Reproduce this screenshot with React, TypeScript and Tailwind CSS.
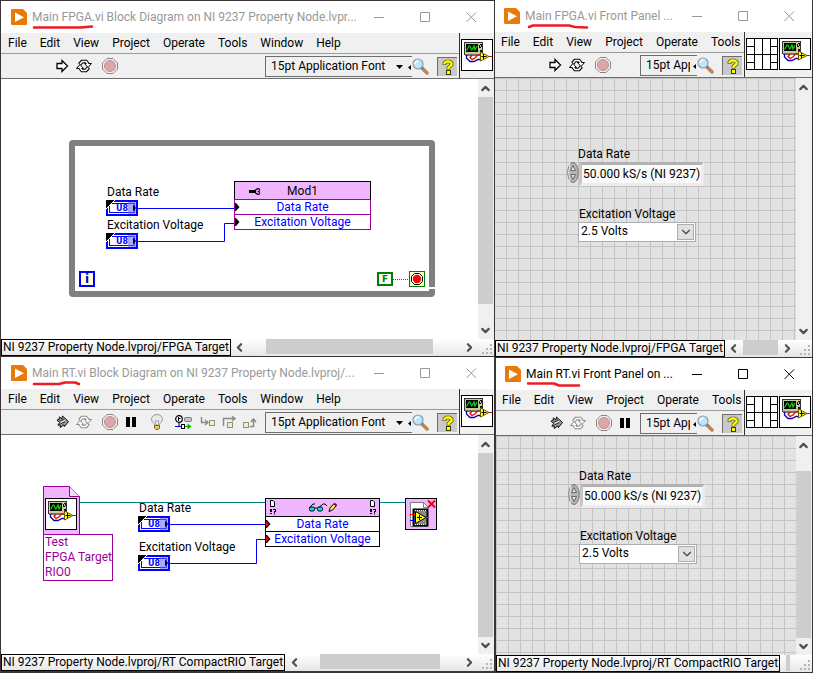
import React, { useId } from "react";
import { ChevronDown, ChevronLeft, ChevronRight, ChevronUp } from "lucide-react";

const menus = ["File", "Edit", "View", "Project", "Operate", "Tools", "Window", "Help"];

/* ---------- Icons ---------- */

function LogoIcon() {
    return (
        <svg width="16" height="16" viewBox="0 0 16 16" className="shrink-0" aria-hidden="true">
            <path d="M0 1 Q0 0 1 0 H12 L16 4 V15 Q16 16 15 16 H1 Q0 16 0 15 Z" fill="#e9790b" />
            <path d="M4 3.5 L13 8.2 L4 13 Z" fill="#fff" />
        </svg>
    );
}

function ViIcon() {
    return (
        <svg width="32" height="32" viewBox="0 0 32 32" className="block shrink-0" aria-hidden="true">
            <rect x="0.5" y="0.5" width="31" height="31" fill="#fff" stroke="#000" />
            <rect x="3.5" y="3.5" width="18" height="12" fill="#c9c9a3" stroke="#333" />
            <rect x="4" y="15" width="17" height="2" fill="#77775c" />
            <rect x="5" y="5" width="12" height="8" fill="#000" />
            <path d="M5.500 11.500 L8 7 L9 7 L10.500 11 L11 11 L13 7 L14 11 L16 7" fill="none" stroke="#14d214" strokeWidth="1.200" />
            <path d="M19 5h2v1h-2zM18 6h1v2h-1zM20 6h1v2h-1zM18 8h2v1h-2zM19 11h2v2h-2z" fill="#111" />
            <path d="M5.5 16 V19 L9 22.5 H13 L17 20.5 H19" fill="none" stroke="#0000b4" strokeWidth="1.300" />
            <path d="M11 16 L9 18.500 L11 20.5 L14 19 L16 16.500 L19 15.5" fill="none" stroke="#f00000" strokeWidth="1.300" />
            <path d="M27 17.5 H31" stroke="#f00000" />
            <path d="M19.5 13 L28 17.5 L19.5 22 Z" fill="#ffff1e" stroke="#6b5a00" />
            <path d="M20.5 17.5h5M22.500 15v5" stroke="#000" />
        </svg>
    );
}

function ConnectorIcon() {
    return (
        <svg width="32" height="32" viewBox="0 0 32 32" className="block shrink-0" aria-hidden="true">
            <rect x="0.5" y="0.5" width="31" height="31" fill="#fff" stroke="#000" />
            <path d="M8.5 0V32M16.5 0V32M24.5 0V32M0 16.5H32M0 8.5H8M0 24.5H8M24 8.5H32M24 24.5H32" stroke="#000" />
        </svg>
    );
}

function RunIcon({ deployed }: { deployed?: boolean }) {
    if (deployed) {
        return (
            <svg width="13" height="14" viewBox="0 0 14 14" aria-hidden="true">
                <path d="M1 5L3.500 4V1.500L6.500 3.500L7 0.500L13.500 6.500L9 12L8.500 10L4.500 13V10L2 10.500L4 7.500Z" fill="#9a9a9a" stroke="#000" />
                <path d="M4 6L9 4M5 9L10 6.500" stroke="#222" />
                <path d="M5 7.500L10 5" stroke="#fff" />
            </svg>
        );
    }
    return (
        <svg width="13" height="14" viewBox="0 0 13 14" aria-hidden="true">
            <path d="M1 4.5H6V1.5L11.5 7L6 12.5V9.5H1Z" fill="#fff" stroke="#000" strokeWidth="1.3" />
        </svg>
    );
}

function RunContinuousIcon({ dim }: { dim?: boolean }) {
    const color = dim ? "#8c8c8c" : "#000";
    return (
        <svg width="16" height="14" viewBox="0 0 16 14" fill="none" aria-hidden="true">
            <path d="M3.500 5.500L6 2.500H10L12 5" stroke={color} strokeWidth="3.600" />
            <path d="M12.500 8.500L10 11.500H6L4 9" stroke={color} strokeWidth="3.600" />
            <path d="M8.500 4.500H15.500L12 8.500Z" fill="#fff" stroke={color} />
            <path d="M0.500 9.500H7.500L4 5.500Z" fill="#fff" stroke={color} />
            <path d="M4 5L6.200 2.500H10L12 5" stroke="#fff" strokeWidth="1.600" />
            <path d="M12 9L9.800 11.500H6L4 9" stroke="#fff" strokeWidth="1.600" />
        </svg>
    );
}

function AbortIcon() {
    return (
        <svg width="16" height="16" viewBox="0 0 16 16" aria-hidden="true">
            <path d="M5 0.5H11L15.5 5V11L11 15.5H5L0.5 11V5Z" fill="#f6f0f0" stroke="#858585" />
            <circle cx="8" cy="8" r="5.500" fill="#dba6a8" stroke="#c29091" />
        </svg>
    );
}

function PauseIcon() {
    return (
        <svg width="10" height="12" viewBox="0 0 10 12" aria-hidden="true">
            <path d="M0 1H4V11H0ZM6 1H10V11H6Z" fill="#000" />
        </svg>
    );
}

function BulbIcon() {
    return (
        <svg width="12" height="16" viewBox="0 0 12 16" aria-hidden="true">
            <path d="M6 0.500C2.500 0.500 0.500 3 0.500 5.500C0.500 8 3.500 9 3.500 11H8.500C8.500 9 11.500 8 11.500 5.500C11.500 3 9.500 0.500 6 0.500Z" fill="#e9e9e9" stroke="#969696" />
            <path d="M4.500 10V6L6 7.500L7.500 6V10" fill="none" stroke="#aaa" />
            <path d="M3.500 11.500H8.500V14L7 15.500H5L3.500 14Z" fill="#e0cf50" stroke="#6b6430" />
        </svg>
    );
}

function RetainIcon() {
    return (
        <svg width="17" height="15" viewBox="0 0 17 15" aria-hidden="true">
            <circle cx="4" cy="4" r="3.300" fill="#fff" stroke="#000" strokeWidth="1.200" />
            <path d="M3.500 2V6M3.500 3.500H5.500M4 8V11" stroke="#000" />
            <rect x="9.500" y="2.500" width="7" height="4" rx="1" fill="#c4c4c4" stroke="#777" />
            <path d="M0 11.500H6" stroke="#0000d8" />
            <rect x="6.500" y="9.500" width="3" height="4" fill="#fff" stroke="#000" />
            <path d="M10 11.500H14" stroke="#009600" />
            <path d="M12.500 8.500L16.500 11.500L12.500 14.500Z" fill="#00b400" />
        </svg>
    );
}

function StepIcon({ kind }: { kind: "into" | "over" | "out" }) {
    const paths = {
        into: "M1.5 1V6.500H7M5 4L8 6.500L5 9",
        over: "M1.5 10V2.500H12M10 0.500L13 2.500L10 5",
        out: "M8 10.500H11.500V4M9 6L11.500 3L14 6",
    };
    const box = { into: 9, over: 5, out: 1 };
    return (
        <svg width="16" height="13" viewBox="0 0 16 13" aria-hidden="true">
            <rect x={box[kind] + 0.5} y={kind === "into" ? 4.5 : 6.5} width="5" height="5" fill="#f2f2bf" stroke="#8f8f8f" />
            <path d={paths[kind]} fill="none" stroke="#8a8a8a" strokeWidth="1.500" />
        </svg>
    );
}

function SearchIcon() {
    return (
        <svg width="17" height="17" viewBox="0 0 17 17" aria-hidden="true">
            <path d="M10 10L15 15" stroke="#b8855c" strokeWidth="3.500" strokeLinecap="round" />
            <path d="M9.500 9L11 10.500" stroke="#777" strokeWidth="2" />
            <circle cx="6" cy="6" r="5" fill="#bfe5fb" stroke="#8b9cb0" strokeWidth="1.200" />
            <path d="M3 6Q3.500 3 6.500 3" fill="none" stroke="#fff" strokeWidth="1.500" />
        </svg>
    );
}

function HelpIcon() {
    return (
        <svg width="12" height="16" viewBox="0 0 12 16" aria-hidden="true">
            <path d="M2.500 6V4L4.500 2.500H7.500L9.500 4V6L6.500 8.500V10.500" fill="none" stroke="#3a3a00" strokeWidth="3.600" />
            <rect x="4" y="11" width="5" height="5" fill="#3a3a00" />
            <path d="M2.500 5.500V4L4.500 2.500H7.500L9.500 4V6L6.500 8.500V10" fill="none" stroke="#ffff00" strokeWidth="2.400" />
            <rect x="5" y="12" width="3" height="3" fill="#ffff00" />
        </svg>
    );
}

/* ---------- Window chrome ---------- */

interface VIWindowProps {
    title: string;
    active?: boolean;
    underline: string;
    running?: boolean;
    panel?: boolean;
    target: string;
    thumbX?: string;
    thumbY?: string;
    className: string;
    canvasClassName: string;
    children: React.ReactNode;
}

function TitleBar({ title, active, underline, panel }: { title: string; active?: boolean; underline: string; panel?: boolean }) {
    const tone = active ? "text-black" : "text-[#999999]";
    const button = "flex w-[46px] h-8 items-center justify-center";
    return (
        <header className={`relative flex h-8 items-center bg-white ${panel ? "pl-[9px]" : "pl-[10px]"} ${tone}`}>
            <LogoIcon />
            <h2 className="ml-[5px] min-w-0 flex-1 overflow-hidden whitespace-nowrap">{title}</h2>
            <svg width="80" height="8" viewBox="0 0 80 8" className="absolute left-[30px] top-[22px]" aria-hidden="true">
                <path d={underline} fill="none" stroke="#ed1c24" strokeWidth="2.500" strokeLinecap="round" strokeLinejoin="round" />
            </svg>
            <div className="flex shrink-0">
                <button aria-label="Minimize" className={button}>
                    <svg width="11" height="11" stroke="currentColor" fill="none"><path d="M0 5.500H10" /></svg>
                </button>
                <button aria-label="Maximize" className={button}>
                    <svg width="11" height="11" stroke="currentColor" fill="none"><path d="M0.500 0.500H9.500V9.500H0.500Z" /></svg>
                </button>
                <button aria-label="Close" className={button}>
                    <svg width="11" height="11" stroke="currentColor" fill="none"><path d="M0.500 0.500L10 10M10 0.500L0.500 10" /></svg>
                </button>
            </div>
        </header>
    );
}

function Toolbar({ running, panel }: { running?: boolean; panel?: boolean }) {
    return (
        <div className={`flex h-6 items-center overflow-hidden ${panel ? "pl-[54px]" : "pl-[55px]"}`}>
            <button aria-label="Run" className="shrink-0"><RunIcon deployed={running} /></button>
            <button aria-label="Run Continuously" className="ml-[7px] shrink-0"><RunContinuousIcon dim={running} /></button>
            <button aria-label="Abort" className="ml-[10px] shrink-0"><AbortIcon /></button>
            {running && <button aria-label="Pause" className="ml-2 shrink-0"><PauseIcon /></button>}
            {running && !panel && (
                <>
                    <button aria-label="Highlight Execution" className="ml-[15px] shrink-0"><BulbIcon /></button>
                    <button aria-label="Retain Wire Values" className="ml-3 shrink-0"><RetainIcon /></button>
                    <button aria-label="Step Into" className="ml-2 shrink-0"><StepIcon kind="into" /></button>
                    <button aria-label="Step Over" className="ml-[6px] shrink-0"><StepIcon kind="over" /></button>
                    <button aria-label="Step Out" className="ml-1 shrink-0"><StepIcon kind="out" /></button>
                </>
            )}
            <div className="ml-auto flex shrink-0 items-center">
                <div className={`relative h-[21px] border-y border-l border-[#6e6e6e] ${panel ? "w-[57px]" : "w-[147px]"}`}>
                    <select
                        aria-label="Text Settings"
                        className={`block h-[19px] appearance-none overflow-hidden bg-transparent pl-[5px] text-black ${panel ? "w-[49px]" : "w-full"}`}
                    >
                        <option>15pt Application Font</option>
                    </select>
                    <svg width="16" height="7" className="pointer-events-none absolute right-0 top-[7px]" aria-hidden="true">
                        {!panel && <path d="M0 1H7L3.500 5Z" fill="#000" />}
                        <path d="M15 1V6L12 3.500Z" fill="#000" />
                    </svg>
                </div>
                <button aria-label="Search"><SearchIcon /></button>
                <button
                    aria-label="Show Context Help"
                    className="ml-2 mr-[2px] flex h-[19px] w-5 items-center justify-center border-l border-t border-[#6e6e6e] bg-[#c9c9c9]"
                >
                    <HelpIcon />
                </button>
            </div>
        </div>
    );
}

function VerticalScroll({ thumb }: { thumb?: string }) {
    return (
        <div className="flex w-4 shrink-0 flex-col bg-[#f0f0f0] pr-px text-[#505050]">
            <button aria-label="Scroll up" className="flex h-[18px] items-center justify-center">
                <ChevronUp size={13} strokeWidth={4} />
            </button>
            <div className="flex-1">{thumb && <div className={`w-full bg-[#cdcdcd] ${thumb}`} />}</div>
            <button aria-label="Scroll down" className="flex h-[17px] items-center justify-center">
                <ChevronDown size={13} strokeWidth={4} />
            </button>
        </div>
    );
}

function StatusBar({ target, thumb }: { target: string; thumb?: string }) {
    return (
        <footer className="flex h-[17px] bg-linear-to-b from-white to-[#e6e6e6] pr-px text-[#505050]">
            <span className="shrink-0 whitespace-nowrap border border-black px-px leading-[15px] text-black">{target}</span>
            {thumb ? (
                <>
                    <button aria-label="Scroll left" className="flex w-[18px] shrink-0 items-center justify-center">
                        <ChevronLeft size={13} strokeWidth={4} />
                    </button>
                    <div className="min-w-0 flex-1"><div className={`h-[15px] bg-[#cdcdcd] ${thumb}`} /></div>
                    <button aria-label="Scroll right" className="flex w-[18px] shrink-0 items-center justify-center">
                        <ChevronRight size={13} strokeWidth={4} />
                    </button>
                </>
            ) : (
                <div className="flex flex-1 justify-center"><div className="h-4 w-1 bg-[#cdcdcd]" /></div>
            )}
            <svg width="15" height="15" viewBox="0 0 15 15" className="shrink-0" aria-hidden="true">
                <path d="M12 5h2v2h-2zM8 9h2v2h-2zM12 9h2v2h-2zM4 13h2v2h-2zM8 13h2v2h-2zM12 13h2v2h-2z" fill="#b5b5b5" />
            </svg>
        </footer>
    );
}

function VIWindow({ title, active, underline, running, panel, target, thumbX, thumbY, className, canvasClassName, children }: VIWindowProps) {
    return (
        <section className={`flex flex-col border-[#3d3438] ${className}`}>
            <TitleBar title={title} active={active} underline={underline} panel={panel} />
            <div className="flex border-b border-[#6e6e6e] bg-[#f0f0f0]">
                <div className="min-w-0 flex-1">
                    <nav className={`flex h-[21px] items-center gap-[13px] overflow-hidden border-b border-[#9a9a9a] pb-px ${panel ? "pl-[6px]" : "pl-[7px]"}`}>
                        {(panel ? menus.slice(0, 6) : menus).map(name => (
                            <button key={name} className="shrink-0">{name}</button>
                        ))}
                    </nav>
                    <Toolbar running={running} panel={panel} />
                </div>
                <div className="flex items-start gap-px border-l border-[#333] px-px pt-[6px]">
                    {panel && <ConnectorIcon />}
                    <ViIcon />
                </div>
            </div>
            <div className="flex flex-1">
                <div className={`relative min-w-0 flex-1 overflow-hidden ${canvasClassName}`}>{children}</div>
                <VerticalScroll thumb={thumbY} />
            </div>
            <StatusBar target={target} thumb={thumbX} />
        </section>
    );
}

/* ---------- Block diagram parts ---------- */

function U8Terminal({ className }: { className: string }) {
    return (
        <svg width="32" height="16" viewBox="0 0 32 16" className={`absolute ${className}`}>
            <rect x="1" y="1" width="30" height="14" fill="#fff" stroke="#0000ff" strokeWidth="2" />
            <rect x="3.5" y="3.5" width="25" height="9" fill="none" stroke="#0000ff" />
            <rect x="22" y="2" width="8" height="12" fill="#a9a9ff" />
            <path d="M22 3.500H28.500V12.500H22" fill="none" stroke="#3c3cff" />
            <path d="M0 0H9L0 9Z" fill="#000" />
            <path d="M9 0L0 9" stroke="#fff" />
            <path d="M27 4.500L30 8L27 11.500Z" fill="#000" />
            <text x="10" y="11" fontSize="8" fontWeight="bold" fill="#0000ff" fontFamily="DejaVu Sans, sans-serif">U8</text>
        </svg>
    );
}

function NodeRow({ label, className, arrow }: { label: string; className: string; arrow?: string }) {
    return (
        <div className={`relative h-[15px] border-t text-center leading-[14px] text-[#0000ff] ${className}`}>
            <svg width="5" height="8" className="absolute left-0 top-[3px]" aria-hidden="true">
                <path d="M0 0H1L4.500 4L1 8H0Z" fill="#000" />
                {arrow && <path d="M0 1L3 4L0 7Z" fill={arrow} />}
            </svg>
            {label}
        </div>
    );
}

function RefCorner() {
    return (
        <svg width="7" height="16" viewBox="0 0 7 16" aria-hidden="true">
            <path d="M1.500 0.500H4L5.500 2V6.500H1.500Z" fill="#fff" stroke="#000" />
            <path d="M1 9h2v3h-2zM1 13h2v1h-2zM4 9h3v3h-1v1h-1v-2h1v-1h-2zM5 13.500h1v1h-1z" fill="#000" />
        </svg>
    );
}

function FpgaDiagram() {
    return (
        <>
            {/* While loop */}
            <div className="absolute left-[68px] top-[61px] h-[157px] w-[366px] rounded-[4px] border-[6px] border-[#808080]" />
            <svg width="8" height="10" className="absolute left-[427px] top-[208px]" aria-hidden="true">
                <path d="M1 0H8V2H1Z M6 9H8V10H6Z" fill="#fff" />
            </svg>
            <svg className="absolute inset-0 h-full w-full" fill="none" aria-hidden="true">
                <path d="M137 129.500H234M137 162.500H223.500V144.500H234" stroke="#0000ff" />
                <path d="M392 200.500H408" stroke="#008000" strokeDasharray="1 1" />
            </svg>
            <span className="absolute left-[106px] top-[105px]">Data Rate</span>
            <U8Terminal className="left-[105px] top-[121px]" />
            <span className="absolute left-[106px] top-[138px]">Excitation Voltage</span>
            <U8Terminal className="left-[105px] top-[154px]" />

            {/* Mod1 property node */}
            <div className="absolute left-[233px] top-[102px] w-[137px] whitespace-nowrap">
                <div className="relative h-[18px] border-x border-t border-black bg-[#efb6ff] text-center leading-[18px]">
                    <svg width="12" height="7" className="absolute left-[14px] top-[6px]" aria-hidden="true">
                        <path d="M0 2H7V5H0Z" fill="#000" />
                        <path d="M11 1.500L9 0.500L6.500 2V5L9 6.500L11 5.500M11 2.500L9.500 3.500L11 4.500" fill="none" stroke="#000" strokeWidth="1.300" />
                    </svg>
                    Mod1
                </div>
                <NodeRow label="Data Rate" className="border-x border-[#990099]" />
                <NodeRow label="Excitation Voltage" className="border-x border-b h-[16px] border-[#990099]" />
            </div>

            {/* Loop terminals */}
            <span className="absolute left-[78px] top-[192px] h-4 w-4 border-2 border-[#0000ff] bg-[#ffffcc] text-center font-['DejaVu_Sans',sans-serif] text-[12px] font-bold leading-[12px] text-[#0000c8]">i</span>
            <span className="absolute left-[376px] top-[193px] h-[14px] w-4 border-2 border-[#008000] bg-white text-center font-['DejaVu_Sans',sans-serif] text-[9px] font-bold leading-[10px] text-[#008000]">F</span>
            <svg width="16" height="16" className="absolute left-[408px] top-[192px]" aria-hidden="true">
                <rect x="0.5" y="0.5" width="15" height="15" fill="#ffffcc" stroke="#008000" />
                <path d="M5.500 2.500H10.500L13.500 5.500V10.500L10.500 13.500H5.500L2.500 10.500V5.500Z" fill="#fff" stroke="#000" />
                <circle cx="8" cy="8" r="4.200" fill="#ff0000" />
            </svg>
        </>
    );
}

function RtDiagram() {
    return (
        <>
            <svg className="absolute inset-0 h-full w-full" fill="none" aria-hidden="true">
                <path d="M79 67.500H264M379 67.500H404" stroke="#008080" />
                <path d="M169 89.500H265M169 128.500H255.500V104.500H265" stroke="#0000ff" />
            </svg>

            {/* FPGA VI reference */}
            <div className="absolute left-[42px] top-[51px] text-[#990099]">
                <div className="relative h-[48px] w-[37px] pl-[2px] pt-3">
                    <svg width="37" height="49" className="absolute left-0 top-0" aria-hidden="true">
                        <path d="M0.500 0.500H26.500L36.500 10.500V48.500H0.500Z" fill="#efb6ff" stroke="#990099" />
                        <path d="M26.500 0.500V10.500H36.500" fill="#f8dcff" stroke="#990099" />
                    </svg>
                    <div className="relative"><ViIcon /></div>
                </div>
                <div className="w-[70px] whitespace-nowrap border border-[#990099] bg-white pl-px leading-[15px]">
                    <p>Test</p>
                    <p>FPGA Target</p>
                    <p>RIO0</p>
                </div>
            </div>

            <span className="absolute left-[138px] top-[65px]">Data Rate</span>
            <U8Terminal className="left-[137px] top-[81px]" />
            <span className="absolute left-[138px] top-[104px]">Excitation Voltage</span>
            <U8Terminal className="left-[137px] top-[120px]" />

            {/* Read/write control node */}
            <div className="absolute left-[264px] top-[63px] w-[115px] whitespace-nowrap border-b border-black">
                <div className="flex h-[18px] justify-between border-x border-t border-black bg-[#efb6ff] px-[3px] pt-px">
                    <RefCorner />
                    <svg width="30" height="12" viewBox="0 0 30 12" className="mt-px" aria-hidden="true">
                        <path d="M1 7L5 3H7M10 7L15 3L17 3L19 5" fill="none" stroke="#000" />
                        <rect x="1.500" y="6" width="5" height="4" rx="1.500" fill="#00e6e6" stroke="#000" />
                        <rect x="9.500" y="6" width="5" height="4" rx="1.500" fill="#00e6e6" stroke="#000" />
                        <path d="M6.500 7H9.500" stroke="#000" />
                        <path d="M21 10.500L22 7L26 2.500L28.500 4.500L24.500 9Z" fill="#ffe93c" stroke="#000" />
                        <path d="M26 2.500L28.500 4.500" stroke="#7d0078" strokeWidth="2" />
                    </svg>
                    <RefCorner />
                </div>
                <NodeRow label="Data Rate" arrow="#ff0000" className="border-x border-black" />
                <NodeRow label="Excitation Voltage" arrow="#ff0000" className="border-x border-black" />
            </div>

            {/* Close reference */}
            <svg width="32" height="32" viewBox="0 0 32 32" className="absolute left-[404px] top-[63px]" aria-hidden="true">
                <rect x="0.5" y="0.5" width="31" height="31" fill="#efb6ff" stroke="#000" />
                <path d="M5.500 28.500V4.500H18.500L22.500 8.500V28.500Z" fill="#fff" stroke="#808080" />
                <path d="M18.500 4.500V9.500H22.500" fill="none" stroke="#808080" />
                <rect x="8.500" y="11.500" width="14" height="16" fill="#8b8b8b" stroke="#000" strokeWidth="2" />
                <path d="M10 12.500H22M10 26.500H22" stroke="#fff" strokeDasharray="1 1" />
                <path d="M10.500 13.500L21 19.500L10.500 25.500Z" fill="#ffff1e" stroke="#000" />
                <path d="M12 19.500H17M14.500 17V22" stroke="#000" />
                <path d="M5 16.500H10M22 19.500H24" stroke="#ff0000" />
                <path d="M5 22.500H10" stroke="#0000ff" />
                <path d="M23 2.500L30 9.500M30 2.500L23 9.500" stroke="#e60012" strokeWidth="1.800" />
            </svg>
        </>
    );
}

/* ---------- Front panel ---------- */

function FrontPanel({ className }: { className: string }) {
    const id = useId();
    return (
        <div className={`flex flex-col items-start pl-[72px] ${className}`}>
            <label htmlFor={`${id}-rate`} className="pl-[11px]">Data Rate</label>
            <div className="flex items-start">
                <svg width="12" height="21" viewBox="0 0 12 21" aria-hidden="true">
                    <ellipse cx="6" cy="10.500" rx="5.200" ry="10" fill="#b4b4b4" stroke="#777" />
                    <path d="M3 1.500Q0.500 10 3 19" fill="none" stroke="#e8e8e8" />
                    <path d="M6 3.500L8.500 8.500H3.500ZM6 17.500L8.500 12.500H3.500Z" fill="#dedede" stroke="#555" strokeWidth="0.800" />
                </svg>
                <input
                    id={`${id}-rate`}
                    defaultValue="50.000 kS/s (NI 9237)"
                    className="h-6 w-[125px] border-[3px] border-b-[#ececec] border-l-[#c6c6c6] border-r-[#ececec] border-t-[#b2b2b2] bg-[#fafafa] pl-px outline-none"
                />
            </div>
            <label htmlFor={`${id}-volt`} className="mt-5 pl-3">Excitation Voltage</label>
            <div className="relative ml-[11px]">
                <select
                    id={`${id}-volt`}
                    className="block h-5 w-[118px] appearance-none border border-[#abadb3] bg-white pb-[2px] pl-[2px] outline-none"
                >
                    <option>2.5 Volts</option>
                </select>
                <span className="pointer-events-none absolute right-[2px] top-[2px] flex h-4 w-[17px] items-center justify-center border border-[#adadad] bg-[#e1e1e1] text-[#444]">
                    <ChevronDown size={14} />
                </span>
            </div>
        </div>
    );
}

const gridPaper =
    "bg-[#e2e2e2] bg-[linear-gradient(to_right,#c4c4c4_1px,transparent_1px),linear-gradient(to_bottom,#c4c4c4_1px,transparent_1px)] bg-[size:12px_12px]";

export default function App() {
    return (
        <main className="grid min-h-screen grid-cols-[494fr_319fr] bg-[#3d3438] font-[Roboto,'Noto_Sans',sans-serif] text-[12px] leading-4 text-black">
            <div className="flex min-w-0 flex-col">
                <VIWindow
                    title="Main FPGA.vi Block Diagram on NI 9237 Property Node.lvpr..."
                    underline="M3 4.500H50L61 3.500"
                    target="NI 9237 Property Node.lvproj/FPGA Target"
                    thumbX="ml-[8%] w-[79%]"
                    thumbY="h-[92%]"
                    className="flex-1 border-b border-l border-t"
                    canvasClassName="min-h-[260px] bg-white"
                >
                    <FpgaDiagram />
                </VIWindow>
                <VIWindow
                    title="Main RT.vi Block Diagram on NI 9237 Property Node.lvproj/..."
                    underline="M3 5H28L34 3.500H44L48 5"
                    running
                    target="NI 9237 Property Node.lvproj/RT CompactRIO Target"
                    thumbX="ml-[11%] w-[76%]"
                    thumbY="h-full"
                    className="flex-1 border-b-2 border-l"
                    canvasClassName="min-h-[219px] bg-white"
                >
                    <RtDiagram />
                </VIWindow>
            </div>
            <div className="flex min-w-0 flex-col">
                <VIWindow
                    title="Main FPGA.vi Front Panel ..."
                    underline="M4 5L8 3.500H44L50 5L62 5.500"
                    panel
                    target="NI 9237 Property Node.lvproj/FPGA Target"
                    thumbX="w-full"
                    className="flex-1 border-x"
                    canvasClassName={`min-h-[262px] bg-[position:-1px_0px] ${gridPaper}`}
                >
                    <FrontPanel className="pt-[68px]" />
                </VIWindow>
                <VIWindow
                    title="Main RT.vi Front Panel on ..."
                    active
                    underline="M2 3.500H28L33 5.500H53"
                    running
                    panel
                    target="NI 9237 Property Node.lvproj/RT CompactRIO Target"
                    thumbY="mt-[17px] h-[91%]"
                    className="flex-1 border-b border-l-2 border-r border-t"
                    canvasClassName={`min-h-[219px] ${gridPaper}`}
                >
                    <FrontPanel className="pt-8" />
                </VIWindow>
            </div>
        </main>
    );
}
